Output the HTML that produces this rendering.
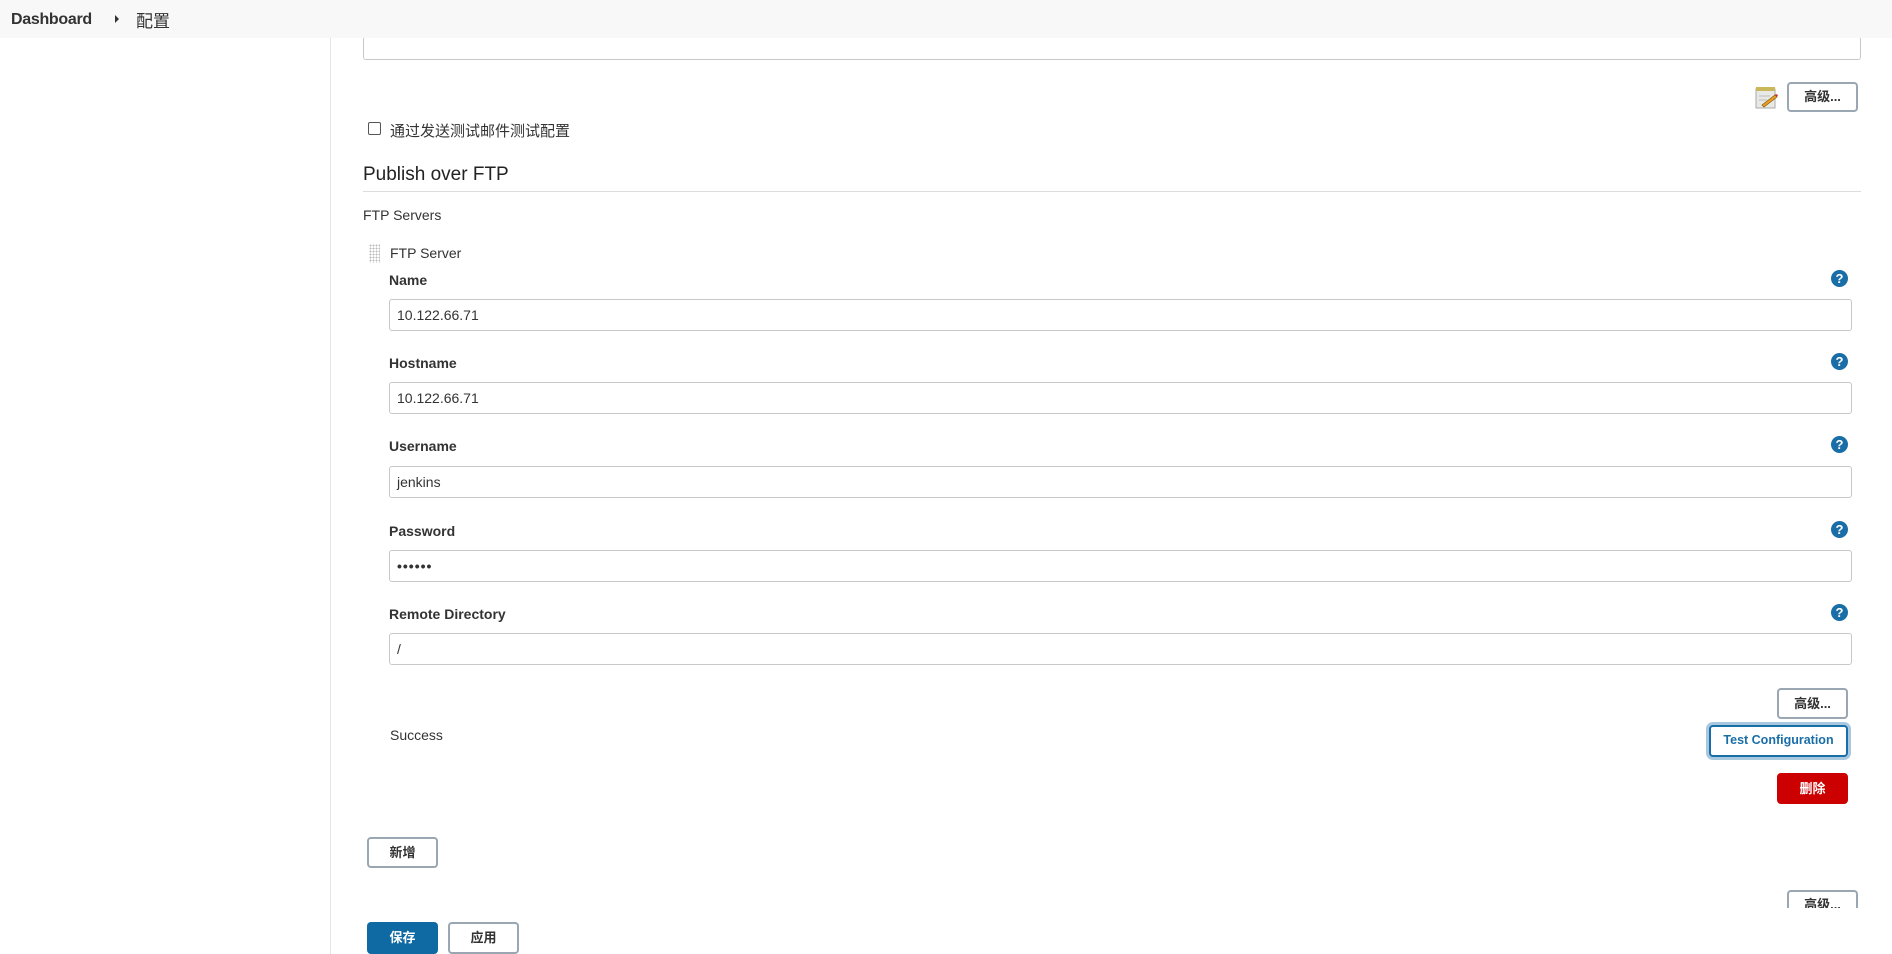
<!DOCTYPE html>
<html><head><meta charset="utf-8">
<style>
*{box-sizing:border-box;margin:0;padding:0}
body{width:1892px;height:954px;overflow:hidden;background:#fff;position:relative;font-family:"Liberation Sans","Noto Sans CJK SC",sans-serif;color:#333}
.a{position:absolute}
.hdr{left:0;top:0;width:1892px;height:38px;background:#f8f8f8;z-index:5}
.inp{position:absolute;left:389px;width:1463px;height:32px;border:1px solid #c8c8c8;border-radius:3px;font-size:14px;padding-left:7px;line-height:30px;color:#333}
.lbl{position:absolute;left:389px;font-size:14px;font-weight:bold;color:#333}
.help{position:absolute;left:1831px;width:17px;height:17px;border-radius:50%;background:#1a6ea8;color:#fff;font-size:13px;font-weight:bold;text-align:center;line-height:17px}
.btn{position:absolute;border:2px solid #9aa6b1;border-radius:4px;background:#fff;font-size:13px;text-align:center;color:#333;font-weight:bold}
</style></head><body>
<div class="a hdr"></div>
<div class="a" style="left:11px;top:11px;font-size:16px;font-weight:bold;color:#333;z-index:6;letter-spacing:-0.3px">Dashboard</div>
<div class="a" style="left:115px;top:15px;width:0;height:0;border-left:4px solid #333;border-top:4px solid transparent;border-bottom:4px solid transparent;z-index:6"></div>
<div class="a" style="left:136px;top:7px;font-size:17px;color:#333;z-index:6">配置</div>
<div class="a" style="left:330px;top:38px;width:1px;height:916px;background:#e5e5e5"></div>
<div class="a" style="left:363px;top:20px;width:1498px;height:40px;border:1px solid #c8c8c8;border-top:none;border-radius:0 0 3px 3px"></div>
<svg class="a" style="left:1755px;top:86px" width="23" height="24" viewBox="0 0 23 24"><rect x="1" y="3" width="19" height="19" fill="#e8e8e4" stroke="#aaa"/><rect x="1" y="1" width="19" height="4" fill="#c8b85a"/><line x1="4" y1="10" x2="15" y2="10" stroke="#bbb"/><line x1="4" y1="14" x2="12" y2="14" stroke="#bbb"/><path d="M7 19 L20 9 L22 11 L9 21 Z" fill="#e8a020" stroke="#8a5a10" stroke-width=".7"/><path d="M20 9 L22 11 L23 9 L21 8Z" fill="#d03030"/></svg>
<div class="btn" style="left:1787px;top:82px;width:71px;height:30px;line-height:26px">高级...</div>
<div class="a" style="left:368px;top:122px;width:13px;height:13px;border:1px solid #555;border-radius:2px"></div>
<div class="a" style="left:390px;top:120px;font-size:15px">通过发送测试邮件测试配置</div>
<div class="a" style="left:363px;top:164px;font-size:19px;color:#222">Publish over FTP</div>
<div class="a" style="left:363px;top:191px;width:1498px;height:1px;background:#dcdcdc"></div>
<div class="a" style="left:363px;top:207px;font-size:14px;color:#333">FTP Servers</div>
<div class="a" style="left:369px;top:244px;width:11px;height:19px;background-image:radial-gradient(#bbb 0.8px,transparent 0.9px);background-size:3px 3px"></div>
<div class="a" style="left:390px;top:245px;font-size:14px">FTP Server</div>

<div class="lbl" style="top:272px">Name</div><div class="help" style="top:270px">?</div>
<div class="inp" style="top:299px">10.122.66.71</div>
<div class="lbl" style="top:355px">Hostname</div><div class="help" style="top:353px">?</div>
<div class="inp" style="top:382px">10.122.66.71</div>
<div class="lbl" style="top:438px">Username</div><div class="help" style="top:436px">?</div>
<div class="inp" style="top:466px">jenkins</div>
<div class="lbl" style="top:523px">Password</div><div class="help" style="top:521px">?</div>
<div class="inp" style="top:550px;font-weight:bold;letter-spacing:1px">••••••</div>
<div class="lbl" style="top:606px">Remote Directory</div><div class="help" style="top:604px">?</div>
<div class="inp" style="top:633px">/</div>

<div class="btn" style="left:1777px;top:688px;width:71px;height:31px;line-height:27px">高级...</div>
<div class="a" style="left:390px;top:727px;font-size:14px">Success</div>
<div class="btn" style="left:1709px;top:725px;width:139px;height:32px;line-height:26px;border-color:#1a6ea8;color:#1a6ea8;box-shadow:0 0 0 3px #a8c8e0;font-size:12.5px">Test Configuration</div>
<div class="btn" style="left:1777px;top:773px;width:71px;height:31px;line-height:31px;border:none;background:#cc0000;color:#fff">删除</div>
<div class="btn" style="left:367px;top:837px;width:71px;height:31px;line-height:27px">新增</div>
<div class="btn" style="left:1787px;top:890px;width:71px;height:30px;line-height:26px">高级...</div>
<div class="a" style="left:331px;top:908px;width:1561px;height:46px;background:#fff"></div>
<div class="btn" style="left:367px;top:922px;width:71px;height:32px;line-height:32px;border:none;background:#0f6aa3;color:#fff">保存</div>
<div class="btn" style="left:448px;top:922px;width:71px;height:32px;line-height:28px">应用</div>
</body></html>
